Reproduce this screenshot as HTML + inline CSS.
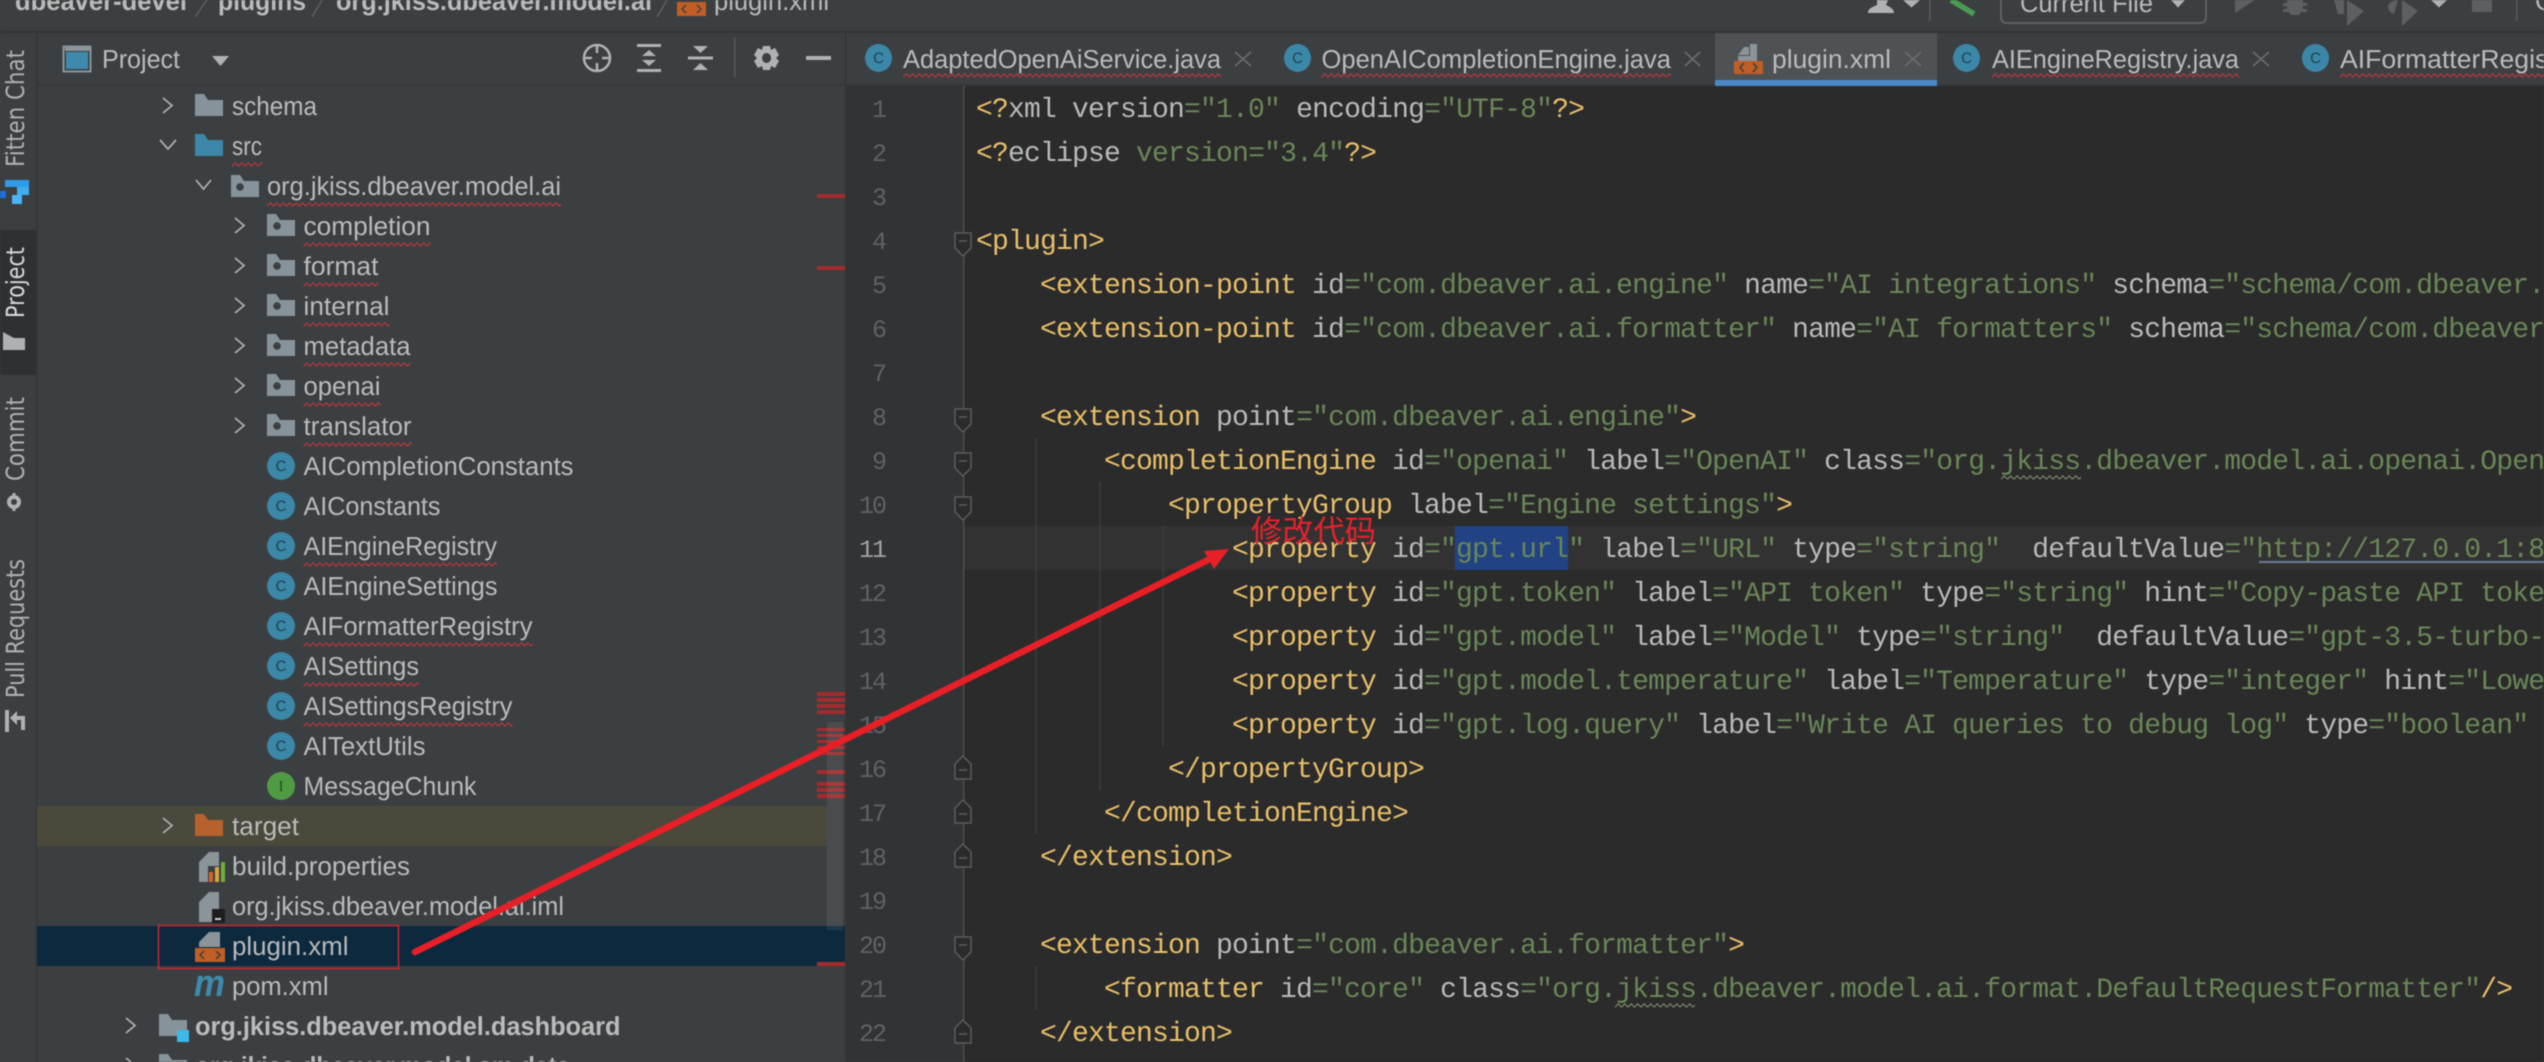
<!DOCTYPE html>
<html lang="en"><head><meta charset="utf-8"><title>plugin.xml</title>
<style>
html,body{margin:0;padding:0;background:#3c3f41;width:2544px;height:1062px;overflow:hidden}
svg{display:block;text-rendering:geometricPrecision;filter:blur(.45px)}
text{white-space:pre}
.u{font-family:"Liberation Sans",sans-serif;font-size:26px;fill:#bbbbbb}
.b{font-weight:bold}
.side{font-family:"DejaVu Sans",sans-serif;font-size:25px;fill:#afb1b3}
.m{font-family:"Liberation Mono",monospace;font-size:28px;letter-spacing:-.8px;fill:#bababa}
.n{font-family:"Liberation Mono",monospace;font-size:25px;letter-spacing:-2px;fill:#606366;text-anchor:end}
.t{fill:#e8bf6a}.a{fill:#bababa}.s{fill:#6a8759}
.c{font-family:"Liberation Sans",sans-serif;font-size:15px;fill:#22404e;text-anchor:middle}
.ic{fill:#afb1b3}
.ch{fill:none;stroke:#afb1b3;stroke-width:1.7}
.x{fill:none;stroke:#6a6d6f;stroke-width:1.6}
.fold{fill:#2b2b2b;stroke:#5b5d5f;stroke-width:1.5}
.g{stroke:#3b3b3b;stroke-width:1.5}
</style></head><body>
<svg width="2544" height="1062" viewBox="0 0 2544 1062" xmlns="http://www.w3.org/2000/svg">
<defs>
<pattern id="w" width="6.5" height="5" patternUnits="userSpaceOnUse"><path d="M0 4.2L3.25 .8L6.5 4.2" fill="none" stroke="#a83a3b" stroke-width="1.4"/></pattern>
<pattern id="wg" width="6.5" height="5" patternUnits="userSpaceOnUse"><path d="M0 4.2L3.25 .8L6.5 4.2" fill="none" stroke="#75876a" stroke-width="1.2"/></pattern>
</defs>

<!-- backgrounds -->
<rect width="2544" height="1062" fill="#3c3f41"/>
<rect x="846" y="86" width="117" height="976" fill="#313335"/>
<rect x="963" y="86" width="1581" height="976" fill="#2b2b2b"/>
<rect y="31" width="2544" height="2" fill="#323436"/>
<rect x="37" y="84" width="2507" height="2" fill="#353739"/>
<rect x="36" y="33" width="1.5" height="1029" fill="#333537"/>
<rect x="845" y="33" width="1.5" height="1029" fill="#333537"/>
<rect x="0" y="230" width="36" height="145" fill="#2e3032"/>

<!-- breadcrumb -->
<text class="u b" x="15" y="10" textLength="172" lengthAdjust="spacingAndGlyphs">dbeaver-devel</text>
<path d="M195 17L207 0M312 17L322 0M657 17L667 0" stroke="#606366" stroke-width="1.3"/>
<text class="u b" x="218" y="10" textLength="88" lengthAdjust="spacingAndGlyphs">plugins</text>
<text class="u b" x="336" y="10" textLength="316" lengthAdjust="spacingAndGlyphs">org.jkiss.dbeaver.model.ai</text>
<rect x="677" y="2" width="29" height="14" fill="#bf5e25"/>
<path d="M686 5L682 9L686 13M697 5L701 9L697 13" fill="none" stroke="#3c3f41" stroke-width="1.4"/>
<text class="u" x="714" y="10" textLength="115" lengthAdjust="spacingAndGlyphs">plugin.xml</text>

<!-- top right toolbar -->
<path d="M1868 13C1868 8 1873 7 1877 5L1877 0H1888L1886 5C1890 7 1894 9 1894 13Z" class="ic"/>
<path d="M1903 0H1920L1911.500 7.500Z" class="ic"/>
<rect x="1929" y="0" width="1.500" height="21" fill="#55585a"/>
<path d="M1951 0L1974 14" stroke="#499c54" stroke-width="5.500"/>
<path d="M2001 0V17Q2001 23 2007 23H2200Q2206 23 2206 17V0" fill="none" stroke="#646668" stroke-width="1.700"/>
<text class="u" x="2020" y="12" textLength="133" lengthAdjust="spacingAndGlyphs" fill="#bbbbbb">Current File</text>
<path d="M2171 0H2185L2178 7.500Z" class="ic"/>
<path d="M2235 0H2255L2235 13Z" fill="#5d6062"/>
<path d="M2287 0H2303V3H2307V6H2303V9H2307V12H2301L2299 15H2291L2289 12H2283V9H2287V6H2283V3H2287Z" fill="#5d6062"/>
<path d="M2334 0H2344V14H2338ZM2347 0L2364 11L2347 26Z" fill="#5d6062"/>
<path d="M2388 6Q2390 0 2398 0L2394 14Q2388 12 2388 6ZM2402 0L2418 11L2402 26Z" fill="#5d6062"/>
<path d="M2431 0H2447L2439 7.500Z" class="ic"/>
<rect x="2472" y="0" width="20" height="12" fill="#5d6062"/>
<rect x="2516" y="0" width="1.500" height="21" fill="#55585a"/>
<text class="u" x="2535" y="10" fill="#bbbbbb">G</text>

<!-- left stripe -->
<text class="side" transform="translate(24,167) rotate(-90)" textLength="117" lengthAdjust="spacingAndGlyphs">Fitten Chat</text>
<rect x="5" y="180" width="24" height="7" fill="#2f9ce9"/><rect x="17" y="187" width="12" height="8" fill="#41aef2"/><rect x="12" y="195" width="10" height="9" fill="#4ab5f5"/><rect x="0" y="191" width="6" height="7" fill="#1c6fe0"/>
<text class="side" style="fill:#d8d8d8" transform="translate(24,318) rotate(-90)" textLength="71" lengthAdjust="spacingAndGlyphs">Project</text>
<path d="M3 350V332L12 337L14 338H25V350Z" class="ic"/>
<text class="side" transform="translate(24,481) rotate(-90)" textLength="84" lengthAdjust="spacingAndGlyphs">Commit</text>
<circle cx="14" cy="502" r="5" fill="none" stroke="#afb1b3" stroke-width="4"/><path d="M14 493V497M14 507V511" stroke="#afb1b3" stroke-width="3"/>
<text class="side" transform="translate(24,698) rotate(-90)" textLength="139" lengthAdjust="spacingAndGlyphs">Pull Requests</text>
<path d="M5 710H9V732H5ZM10 718L17 711V716H25V730H21V720H17V725Z" class="ic"/>

<!-- project header -->
<rect x="63.500" y="46.500" width="27" height="25" fill="none" stroke="#8a9499" stroke-width="2"/><rect x="66" y="52" width="22" height="17" fill="#3d8aac"/><rect x="65" y="47" width="25" height="4" fill="#8a9499"/>
<text class="u" x="102" y="68" textLength="78" lengthAdjust="spacingAndGlyphs">Project</text>
<path d="M212 56H229L220.500 66Z" class="ic"/>
<ellipse cx="597" cy="58" rx="13" ry="13" fill="none" stroke="#afb1b3" stroke-width="2.500"/>
<path d="M597 45V53M597 63V71M584 58H592M602 58H610" stroke="#afb1b3" stroke-width="2.500"/>
<path d="M637 44H661V47H637ZM637 69H661V72H637ZM649 50L656 56H642ZM642 60H656L649 66Z" class="ic"/>
<path d="M688 56.500H713V59.500H688ZM693 46H708L700.500 53ZM700.500 63L708 70H693Z" class="ic"/>
<rect x="734" y="38" width="1.500" height="39" fill="#55585a"/>
<path fill-rule="evenodd" d="M763 46H770L771 50L775 48L779 55L776 58L779 61L775 68L771 66L770 70H763L762 66L758 68L754 61L757 58L754 55L758 48L762 50ZM766.500 53A4.500 5 0 1 0 766.600 63A4.500 5 0 1 0 766.500 53Z" class="ic"/>
<rect x="806" y="56" width="25" height="4" class="ic"/>

<!-- tree highlights -->
<rect x="37" y="806" width="790" height="40" fill="#4b493b"/>
<rect x="37" y="926" width="808" height="40" fill="#0d293e"/>
<g fill="#a52b2c">
<rect x="817" y="194" width="28" height="4"/><rect x="817" y="266" width="28" height="4"/>
<rect x="817" y="692" width="28" height="4"/><rect x="817" y="698" width="28" height="4"/><rect x="817" y="704" width="28" height="4"/><rect x="817" y="710" width="28" height="4"/>
<rect x="817" y="728" width="28" height="3"/><rect x="817" y="734" width="28" height="3"/><rect x="817" y="740" width="28" height="3"/><rect x="817" y="746" width="28" height="3"/><rect x="817" y="752" width="28" height="3"/>
<rect x="817" y="770" width="28" height="4"/><rect x="817" y="782" width="28" height="4"/><rect x="817" y="788" width="28" height="4"/><rect x="817" y="794" width="28" height="4"/>
<rect x="817" y="962" width="28" height="4"/>
</g>
<rect x="827" y="722" width="16" height="208" fill="#ffffff" fill-opacity=".07"/>

<!-- tree chevrons -->
<path class="ch" d="M163 98L172 105.500L163 113"/>
<path class="ch" d="M160 140L168 149L176 140"/>
<path class="ch" d="M196 180L203.500 189L211 180"/>
<path class="ch" d="M235 218L244 225.500L235 233M235 258L244 265.500L235 273M235 298L244 305.500L235 313M235 338L244 345.500L235 353M235 378L244 385.500L235 393M235 418L244 425.500L235 433"/>
<path class="ch" d="M163 818L172 825.500L163 833"/>
<path class="ch" d="M126 1018L135 1025.500L126 1033M126 1058L131 1062"/>

<!-- folders -->
<path d="M195 94H204L208 100H223V116H195Z" fill="#87939a"/>
<path d="M195 134H204L208 140H223V156H195Z" fill="#3d87a8"/>
<path d="M231 175H240L244 181H259V197H231Z" fill="#87939a"/><circle cx="240" cy="187" r="3.800" fill="#3c3f41"/>
<g fill="#87939a">
<path d="M267 214H276L280 220H295V236H267Z"/><path d="M267 254H276L280 260H295V276H267Z"/><path d="M267 294H276L280 300H295V316H267Z"/><path d="M267 334H276L280 340H295V356H267Z"/><path d="M267 374H276L280 380H295V396H267Z"/><path d="M267 414H276L280 420H295V436H267Z"/>
</g>
<g fill="#3c3f41"><circle cx="277" cy="226" r="3.800"/><circle cx="277" cy="266" r="3.800"/><circle cx="277" cy="306" r="3.800"/><circle cx="277" cy="346" r="3.800"/><circle cx="277" cy="386" r="3.800"/><circle cx="277" cy="426" r="3.800"/></g>
<path d="M195 814H204L208 820H223V836H195Z" fill="#b7622e"/>

<!-- class icons -->
<g fill="#3b87a7">
<circle cx="281" cy="466" r="14"/><circle cx="281" cy="506" r="14"/><circle cx="281" cy="546" r="14"/><circle cx="281" cy="586" r="14"/><circle cx="281" cy="626" r="14"/><circle cx="281" cy="666" r="14"/><circle cx="281" cy="706" r="14"/><circle cx="281" cy="746" r="14"/>
</g>
<circle cx="281" cy="786" r="14" fill="#4f9b43"/>
<text class="c" x="281" y="471">C</text><text class="c" x="281" y="511">C</text><text class="c" x="281" y="551">C</text><text class="c" x="281" y="591">C</text><text class="c" x="281" y="631">C</text><text class="c" x="281" y="671">C</text><text class="c" x="281" y="711">C</text><text class="c" x="281" y="751">C</text>
<text class="c" x="281" y="791" style="fill:#234a1f;font-family:'Liberation Serif',serif">I</text>

<!-- file icons -->
<path d="M209 852H219V882H199V862Z" fill="#8a9499"/><rect x="208" y="866" width="17" height="17" fill="#3c3f41"/>
<rect x="209" y="872" width="4" height="10" fill="#d5652a"/><rect x="215" y="867" width="4" height="15" fill="#d9a441"/><rect x="221" y="862" width="4" height="20" fill="#6fae3d"/>
<path d="M209 892H219V922H199V902Z" fill="#8a9499"/><rect x="212" y="909" width="13" height="14" fill="#1d1e1f"/><rect x="215" y="918" width="6" height="2" fill="#cfcfcf"/>
<path d="M209 932H220V947H199V942Z" fill="#8a9499"/><rect x="195" y="948" width="30" height="14" fill="#bf5e25"/>
<path d="M204 951L200 955L204 959M216 951L220 955L216 959" fill="none" stroke="#3c3f41" stroke-width="1.500"/>
<text x="194" y="996" style="font-family:'Liberation Sans',sans-serif;font-size:38px;font-weight:bold;font-style:italic;fill:#3d8aac" textLength="31" lengthAdjust="spacingAndGlyphs">m</text>
<path d="M159 1014H168L172 1020H187V1030H177V1036H159Z" fill="#87939a"/><rect x="177" y="1030" width="12" height="12" fill="#3db8e8"/>
<path d="M159 1054H168L172 1060H187V1062H159Z" fill="#87939a"/>

<!-- tree text -->
<text class="u" x="232" y="115" textLength="85" lengthAdjust="spacingAndGlyphs">schema</text>
<text class="u" x="232" y="155" textLength="30" lengthAdjust="spacingAndGlyphs">src</text>
<text class="u" x="267" y="195" textLength="294" lengthAdjust="spacingAndGlyphs">org.jkiss.dbeaver.model.ai</text>
<text class="u" x="303.500" y="235" textLength="127" lengthAdjust="spacingAndGlyphs">completion</text>
<text class="u" x="303.500" y="275" textLength="75" lengthAdjust="spacingAndGlyphs">format</text>
<text class="u" x="303.500" y="315" textLength="86" lengthAdjust="spacingAndGlyphs">internal</text>
<text class="u" x="303.500" y="355" textLength="107" lengthAdjust="spacingAndGlyphs">metadata</text>
<text class="u" x="303.500" y="395" textLength="77" lengthAdjust="spacingAndGlyphs">openai</text>
<text class="u" x="303.500" y="435" textLength="108" lengthAdjust="spacingAndGlyphs">translator</text>
<text class="u" x="303.500" y="475" textLength="270" lengthAdjust="spacingAndGlyphs">AICompletionConstants</text>
<text class="u" x="303.500" y="515" textLength="137" lengthAdjust="spacingAndGlyphs">AIConstants</text>
<text class="u" x="303.500" y="555" textLength="193.500" lengthAdjust="spacingAndGlyphs">AIEngineRegistry</text>
<text class="u" x="303.500" y="595" textLength="194" lengthAdjust="spacingAndGlyphs">AIEngineSettings</text>
<text class="u" x="303.500" y="635" textLength="229" lengthAdjust="spacingAndGlyphs">AIFormatterRegistry</text>
<text class="u" x="303.500" y="675" textLength="115.500" lengthAdjust="spacingAndGlyphs">AISettings</text>
<text class="u" x="303.500" y="715" textLength="209" lengthAdjust="spacingAndGlyphs">AISettingsRegistry</text>
<text class="u" x="303.500" y="755" textLength="122" lengthAdjust="spacingAndGlyphs">AITextUtils</text>
<text class="u" x="303.500" y="795" textLength="173" lengthAdjust="spacingAndGlyphs">MessageChunk</text>
<text class="u" x="232" y="835" textLength="67" lengthAdjust="spacingAndGlyphs">target</text>
<text class="u" x="232" y="875" textLength="178" lengthAdjust="spacingAndGlyphs">build.properties</text>
<text class="u" x="232" y="915" textLength="332" lengthAdjust="spacingAndGlyphs">org.jkiss.dbeaver.model.ai.iml</text>
<text class="u" x="232" y="955" textLength="116.500" lengthAdjust="spacingAndGlyphs">plugin.xml</text>
<text class="u" x="232" y="995" textLength="96.500" lengthAdjust="spacingAndGlyphs">pom.xml</text>
<text class="u b" x="195" y="1035" textLength="425.500" lengthAdjust="spacingAndGlyphs">org.jkiss.dbeaver.model.dashboard</text>
<text class="u b" x="195" y="1075" textLength="375" lengthAdjust="spacingAndGlyphs">org.jkiss.dbeaver.model.sm.data</text>

<!-- tree squiggles -->
<rect transform="translate(232,162)" width="30" height="5" fill="url(#w)"/>
<rect transform="translate(267,202)" width="294" height="5" fill="url(#w)"/>
<rect transform="translate(303.500,242)" width="127" height="5" fill="url(#w)"/>
<rect transform="translate(303.500,282)" width="75" height="5" fill="url(#w)"/>
<rect transform="translate(303.500,322)" width="86" height="5" fill="url(#w)"/>
<rect transform="translate(303.500,362)" width="107" height="5" fill="url(#w)"/>
<rect transform="translate(303.500,402)" width="77" height="5" fill="url(#w)"/>
<rect transform="translate(303.500,442)" width="108" height="5" fill="url(#w)"/>
<rect transform="translate(303.500,562)" width="193.500" height="5" fill="url(#w)"/>
<rect transform="translate(303.500,642)" width="229" height="5" fill="url(#w)"/>
<rect transform="translate(303.500,682)" width="115.500" height="5" fill="url(#w)"/>
<rect transform="translate(303.500,722)" width="209" height="5" fill="url(#w)"/>

<!-- tabs -->
<rect x="1715" y="33" width="222" height="51" fill="#4e5254"/>
<rect x="1715" y="80" width="222" height="6" fill="#4a88c7"/>
<g fill="#3b87a7"><ellipse cx="878.500" cy="58" rx="13.500" ry="14"/><ellipse cx="1297.500" cy="58" rx="13.500" ry="14"/><ellipse cx="1966.500" cy="58" rx="13.500" ry="14"/><ellipse cx="2315.500" cy="58" rx="13.500" ry="14"/></g>
<text class="c" x="878.500" y="63">C</text><text class="c" x="1297.500" y="63">C</text><text class="c" x="1966.500" y="63">C</text><text class="c" x="2315.500" y="63">C</text>
<text class="u" x="903" y="68" textLength="318" lengthAdjust="spacingAndGlyphs">AdaptedOpenAiService.java</text>
<text class="u" x="1321.500" y="68" textLength="349.500" lengthAdjust="spacingAndGlyphs">OpenAICompletionEngine.java</text>
<text class="u" x="1772" y="68" textLength="119" lengthAdjust="spacingAndGlyphs">plugin.xml</text>
<text class="u" x="1992" y="68" textLength="247" lengthAdjust="spacingAndGlyphs">AIEngineRegistry.java</text>
<text class="u" x="2340" y="68" textLength="292" lengthAdjust="spacingAndGlyphs">AIFormatterRegistry.java</text>
<rect transform="translate(903,73)" width="318" height="5" fill="url(#w)"/>
<rect transform="translate(1321.500,73)" width="349.500" height="5" fill="url(#w)"/>
<rect transform="translate(1992,73)" width="247" height="5" fill="url(#w)"/>
<rect transform="translate(2340,73)" width="204" height="5" fill="url(#w)"/>
<path class="x" d="M1235 52L1251 66M1251 52L1235 66M1685 52L1700 66M1700 52L1685 66M1905 52L1921 66M1921 52L1905 66M2253 52L2269 66M2269 52L2253 66"/>
<path d="M1749 44V47H1744L1738 55H1749V44ZM1750 44H1757V61H1738V56H1750Z" fill="#8a9499"/>
<rect x="1734" y="61" width="29" height="13" fill="#bf5e25"/>
<path d="M1744 63L1740 67.500L1744 72M1753 63L1757 67.500L1753 72" fill="none" stroke="#3c3f41" stroke-width="1.500"/>

<!-- editor decorations -->
<rect x="963" y="526" width="1581" height="44" fill="#323232"/>
<rect x="1455" y="526" width="113" height="44" fill="#214283"/>
<rect x="963" y="86" width="1.500" height="976" fill="#4b4d4f"/>
<path class="g" d="M1036 438V834M1036 966V1010M1100 482V790M1163 526V746" fill="none"/>
<rect x="2259" y="561" width="285" height="2" fill="#6b7a95"/>
<rect transform="translate(2001,475)" width="80" height="5" fill="url(#wg)"/>
<rect transform="translate(1615,1003)" width="80" height="5" fill="url(#wg)"/>

<!-- fold markers -->
<g class="fold">
<path d="M955 233H971V248L963 256L955 248Z"/><path d="M955 409H971V424L963 432L955 424Z"/><path d="M955 453H971V468L963 476L955 468Z"/><path d="M955 497H971V512L963 520L955 512Z"/><path d="M955 937H971V952L963 960L955 952Z"/>
<path d="M955 779H971V764L963 756L955 764Z"/><path d="M955 823H971V808L963 800L955 808Z"/><path d="M955 867H971V852L963 844L955 852Z"/><path d="M955 1043H971V1028L963 1020L955 1028Z"/>
</g>
<path d="M959 241H967M959 417H967M959 461H967M959 505H967M959 945H967M959 770H967M959 814H967M959 858H967M959 1034H967" stroke="#5b5d5f" stroke-width="1.500"/>

<!-- line numbers -->
<text class="n" x="885" y="117">1</text><text class="n" x="885" y="161">2</text><text class="n" x="885" y="205">3</text><text class="n" x="885" y="249">4</text><text class="n" x="885" y="293">5</text><text class="n" x="885" y="337">6</text><text class="n" x="885" y="381">7</text><text class="n" x="885" y="425">8</text><text class="n" x="885" y="469">9</text><text class="n" x="885" y="513">10</text><text class="n" x="885" y="557" style="fill:#a4a3a3">11</text><text class="n" x="885" y="601">12</text><text class="n" x="885" y="645">13</text><text class="n" x="885" y="689">14</text><text class="n" x="885" y="733">15</text><text class="n" x="885" y="777">16</text><text class="n" x="885" y="821">17</text><text class="n" x="885" y="865">18</text><text class="n" x="885" y="909">19</text><text class="n" x="885" y="953">20</text><text class="n" x="885" y="997">21</text><text class="n" x="885" y="1041">22</text>

<!-- code -->
<text class="m" x="976" y="117"><tspan class="t">&lt;?</tspan><tspan class="a">xml version</tspan><tspan class="s">="1.0"</tspan><tspan class="a"> encoding</tspan><tspan class="s">="UTF-8"</tspan><tspan class="t">?&gt;</tspan></text>
<text class="m" x="976" y="161"><tspan class="t">&lt;?</tspan><tspan class="a">eclipse </tspan><tspan class="s">version="3.4"</tspan><tspan class="t">?&gt;</tspan></text>
<text class="m" x="976" y="249"><tspan class="t">&lt;plugin&gt;</tspan></text>
<text class="m" x="1040" y="293"><tspan class="t">&lt;extension-point</tspan><tspan class="a"> id</tspan><tspan class="s">="com.dbeaver.ai.engine"</tspan><tspan class="a"> name</tspan><tspan class="s">="AI integrations"</tspan><tspan class="a"> schema</tspan><tspan class="s">="schema/com.dbeaver.ai.engine.exsd"</tspan></text>
<text class="m" x="1040" y="337"><tspan class="t">&lt;extension-point</tspan><tspan class="a"> id</tspan><tspan class="s">="com.dbeaver.ai.formatter"</tspan><tspan class="a"> name</tspan><tspan class="s">="AI formatters"</tspan><tspan class="a"> schema</tspan><tspan class="s">="schema/com.dbeaver.ai.formatter.exsd"</tspan></text>
<text class="m" x="1040" y="425"><tspan class="t">&lt;extension</tspan><tspan class="a"> point</tspan><tspan class="s">="com.dbeaver.ai.engine"</tspan><tspan class="t">&gt;</tspan></text>
<text class="m" x="1104" y="469"><tspan class="t">&lt;completionEngine</tspan><tspan class="a"> id</tspan><tspan class="s">="openai"</tspan><tspan class="a"> label</tspan><tspan class="s">="OpenAI"</tspan><tspan class="a"> class</tspan><tspan class="s">="org.jkiss.dbeaver.model.ai.openai.OpenAICompletionEngine"</tspan></text>
<text class="m" x="1168" y="513"><tspan class="t">&lt;propertyGroup</tspan><tspan class="a"> label</tspan><tspan class="s">="Engine settings"</tspan><tspan class="t">&gt;</tspan></text>
<text class="m" x="1232" y="557"><tspan class="t">&lt;property</tspan><tspan class="a"> id</tspan><tspan class="s">="gpt.url"</tspan><tspan class="a"> label</tspan><tspan class="s">="URL"</tspan><tspan class="a"> type</tspan><tspan class="s">="string"</tspan><tspan class="a">  defaultValue</tspan><tspan class="s">="http://127.0.0.1:8000/v1"</tspan></text>
<text class="m" x="1232" y="601"><tspan class="t">&lt;property</tspan><tspan class="a"> id</tspan><tspan class="s">="gpt.token"</tspan><tspan class="a"> label</tspan><tspan class="s">="API token"</tspan><tspan class="a"> type</tspan><tspan class="s">="string"</tspan><tspan class="a"> hint</tspan><tspan class="s">="Copy-paste API token"</tspan></text>
<text class="m" x="1232" y="645"><tspan class="t">&lt;property</tspan><tspan class="a"> id</tspan><tspan class="s">="gpt.model"</tspan><tspan class="a"> label</tspan><tspan class="s">="Model"</tspan><tspan class="a"> type</tspan><tspan class="s">="string"</tspan><tspan class="a">  defaultValue</tspan><tspan class="s">="gpt-3.5-turbo-instruct"</tspan></text>
<text class="m" x="1232" y="689"><tspan class="t">&lt;property</tspan><tspan class="a"> id</tspan><tspan class="s">="gpt.model.temperature"</tspan><tspan class="a"> label</tspan><tspan class="s">="Temperature"</tspan><tspan class="a"> type</tspan><tspan class="s">="integer"</tspan><tspan class="a"> hint</tspan><tspan class="s">="Lower temperature"</tspan></text>
<text class="m" x="1232" y="733"><tspan class="t">&lt;property</tspan><tspan class="a"> id</tspan><tspan class="s">="gpt.log.query"</tspan><tspan class="a"> label</tspan><tspan class="s">="Write AI queries to debug log"</tspan><tspan class="a"> type</tspan><tspan class="s">="boolean"</tspan></text>
<text class="m" x="1168" y="777"><tspan class="t">&lt;/propertyGroup&gt;</tspan></text>
<text class="m" x="1104" y="821"><tspan class="t">&lt;/completionEngine&gt;</tspan></text>
<text class="m" x="1040" y="865"><tspan class="t">&lt;/extension&gt;</tspan></text>
<text class="m" x="1040" y="953"><tspan class="t">&lt;extension</tspan><tspan class="a"> point</tspan><tspan class="s">="com.dbeaver.ai.formatter"</tspan><tspan class="t">&gt;</tspan></text>
<text class="m" x="1104" y="997"><tspan class="t">&lt;formatter</tspan><tspan class="a"> id</tspan><tspan class="s">="core"</tspan><tspan class="a"> class</tspan><tspan class="s">="org.jkiss.dbeaver.model.ai.format.DefaultRequestFormatter"</tspan><tspan class="t">/&gt;</tspan></text>
<text class="m" x="1040" y="1041"><tspan class="t">&lt;/extension&gt;</tspan></text>

<!-- annotation -->
<rect x="158.500" y="925.500" width="240" height="43" fill="none" stroke="#c8282f" stroke-width="1.500"/>
<path d="M415 952L1212 558" stroke="#e81f27" stroke-width="6.500" stroke-linecap="round"/>
<path d="M1229 549L1204 551L1214 569Z" fill="#e81f27"/>
<text x="1251" y="542" style="font-family:'Liberation Sans','Noto Sans CJK SC',sans-serif;font-size:31px;fill:#e8212b" textLength="125" lengthAdjust="spacingAndGlyphs">修改代码</text>
</svg>
</body></html>
